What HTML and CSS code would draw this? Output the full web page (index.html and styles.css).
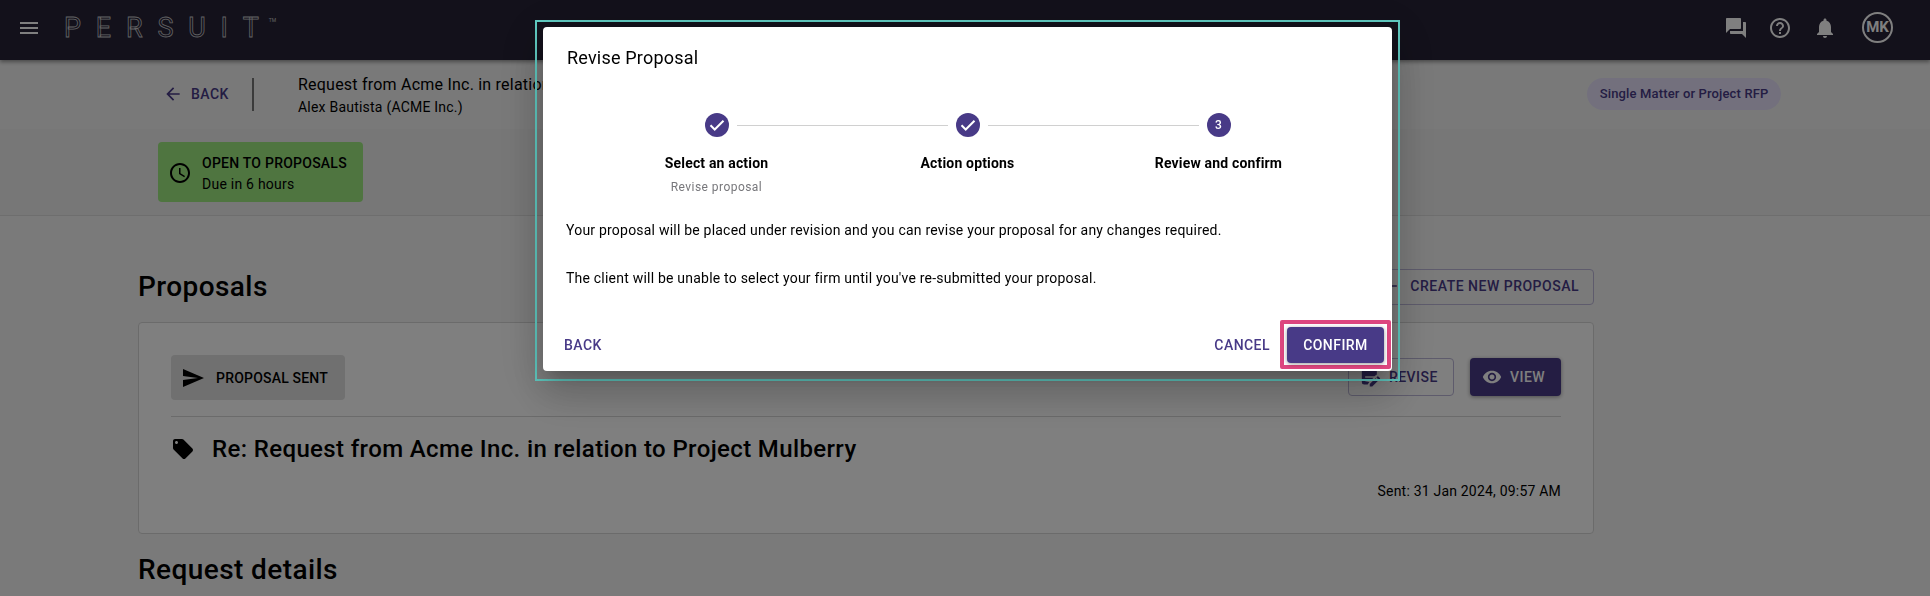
FILE: index.html
```html
<!DOCTYPE html>
<html lang="en">
<head>
    <meta charset="UTF-8">
    <meta name="viewport" content="width=device-width, initial-scale=1.0">
    <title>PERSUIT - Revise Proposal</title>
    <link rel="stylesheet" href="styles.css">
</head>
<body>

<!-- Top bar -->
<header class="topbar">
    <svg class="icon menu-icon" viewBox="0 0 24 24"><path d="M3 18h18v-2H3v2zm0-5h18v-2H3v2zm0-7v2h18V6H3z"/></svg>
    <div class="logo">PERSUI<span class="logo-last">T</span></div>
    <span class="logo-tm">TM</span>
    <div class="topbar-actions">
        <svg class="icon" viewBox="0 0 24 24"><path d="M21 6h-2v9H6v2c0 .55.45 1 1 1h11l4 4V7c0-.55-.45-1-1-1zm-4 6V3c0-.55-.45-1-1-1H3c-.55 0-1 .45-1 1v14l4-4h10c.55 0 1-.45 1-1z"/></svg>
        <svg class="icon" viewBox="0 0 24 24"><path d="M11 18h2v-2h-2v2zm1-16C6.48 2 2 6.48 2 12s4.48 10 10 10 10-4.48 10-10S17.52 2 12 2zm0 18c-4.41 0-8-3.59-8-8s3.59-8 8-8 8 3.59 8 8-3.59 8-8 8zm0-14c-2.21 0-4 1.79-4 4h2c0-1.1.9-2 2-2s2 .9 2 2c0 2-3 1.75-3 5h2c0-2.25 3-2.5 3-5 0-2.21-1.79-4-4-4z"/></svg>
        <svg class="icon" viewBox="0 0 24 24"><path d="M12 22c1.1 0 2-.9 2-2h-4c0 1.1.89 2 2 2zm6-6v-5c0-3.07-1.64-5.64-4.5-6.32V4c0-.83-.67-1.5-1.5-1.5s-1.5.67-1.5 1.5v.68C7.63 5.36 6 7.92 6 11v5l-2 2v1h16v-1l-2-2z"/></svg>
        <div class="avatar">MK</div>
    </div>
</header>

<!-- Request header -->
<div class="request-bar">
    <a class="back-link">
        <svg class="icon" viewBox="0 0 24 24"><path d="M20 11H7.83l5.59-5.59L12 4l-8 8 8 8 1.41-1.41L7.83 13H20v-2z"/></svg>
        <span>BACK</span>
    </a>
    <div class="bar-divider"></div>
    <div class="request-info">
        <div class="request-title">Request from Acme Inc. in relation to Project Mulberry</div>
        <div class="request-owner">Alex Bautista (ACME Inc.)</div>
    </div>
    <div class="chip">Single Matter or Project RFP</div>
</div>

<div class="status-bar">
    <div class="status">
        <svg class="icon" viewBox="0 0 24 24"><path d="M11.99 2C6.47 2 2 6.48 2 12s4.47 10 9.99 10C17.52 22 22 17.52 22 12S17.52 2 11.99 2zM12 20c-4.42 0-8-3.58-8-8s3.58-8 8-8 8 3.58 8 8-3.58 8-8 8zm.5-13H11v6l5.25 3.15.75-1.23-4.5-2.67z"/></svg>
        <div>
            <div class="status-title">OPEN TO PROPOSALS</div>
            <div class="status-due">Due in 6 hours</div>
        </div>
    </div>
</div>

<!-- Proposals -->
<main class="content">
    <div class="section-head">
        <h2 class="section-title">Proposals</h2>
        <button class="btn btn-outline btn-create">
            <svg class="icon" viewBox="0 0 24 24"><path d="M19 13h-6v6h-2v-6H5v-2h6V5h2v6h6v2z"/></svg>
            <span>CREATE NEW PROPOSAL</span>
        </button>
    </div>

    <div class="card">
        <div class="card-head">
            <div class="sent-badge">
                <svg class="icon" viewBox="0 0 24 24"><path d="M2.01 21L23 12 2.01 3 2 10l15 2-15 2z"/></svg>
                <span>PROPOSAL SENT</span>
            </div>
            <div class="card-actions">
                <button class="btn btn-outline btn-revise">
                    <svg class="icon" viewBox="0 0 24 24"><path d="M4 2h12l3 3v4l-3 2H5v2h10l-3 3H5v1l5 1-2 3H4a3 3 0 0 1-3-3V5a3 3 0 0 1 3-3z"/><path d="M10.500 20.500l7-7 3 3-7 7h-3zM18.500 12.500l1.200-1.200c.3-.3.7-.3 1 0l2 2c.3.3.3.7 0 1l-1.200 1.200z"/></svg>
                    <span>REVISE</span>
                </button>
                <button class="btn btn-primary btn-view">
                    <svg class="icon" viewBox="0 0 24 24"><path d="M12 4.5C7 4.5 2.73 7.61 1 12c1.730 4.390 6 7.500 11 7.500s9.270-3.110 11-7.500c-1.730-4.390-6-7.500-11-7.500zM12 17c-2.760 0-5-2.240-5-5s2.240-5 5-5 5 2.240 5 5-2.240 5-5 5zm0-8c-1.660 0-3 1.340-3 3s1.340 3 3 3 3-1.340 3-3-1.340-3-3-3z"/></svg>
                    <span>VIEW</span>
                </button>
            </div>
        </div>
        <div class="card-title">
            <svg class="icon" viewBox="0 0 24 24"><path d="M21.410 11.580l-9-9C12.050 2.220 11.550 2 11 2H4c-1.100 0-2 .9-2 2v7c0 .55.22 1.050.59 1.420l9 9c.36.36.86.58 1.410.58.55 0 1.050-.22 1.410-.59l7-7c.37-.36.59-.86.59-1.410 0-.55-.23-1.060-.59-1.420zM5.500 7C4.670 7 4 6.330 4 5.500S4.670 4 5.500 4 7 4.670 7 5.500 6.330 7 5.500 7z"/></svg>
            <h3>Re: Request from Acme Inc. in relation to Project Mulberry</h3>
        </div>
        <div class="card-date">Sent: 31 Jan 2024, 09:57 AM</div>
    </div>

    <h2 class="section-title">Request details</h2>
</main>

<!-- Dialog -->
<div class="backdrop">
    <div class="dialog-frame">
        <div class="dialog">
            <h1 class="dialog-title">Revise Proposal</h1>
            <div class="stepper">
                <div class="step">
                    <svg class="step-dot" viewBox="0 0 24 24"><circle cx="12" cy="12" r="12"/><path d="M5.500 12.300l4.200 4.200 8.800-8.800"/></svg>
                    <div class="step-label">Select an action</div>
                    <div class="step-note">Revise proposal</div>
                </div>
                <div class="step step-line">
                    <svg class="step-dot" viewBox="0 0 24 24"><circle cx="12" cy="12" r="12"/><path d="M5.500 12.300l4.200 4.200 8.800-8.800"/></svg>
                    <div class="step-label">Action options</div>
                </div>
                <div class="step step-line">
                    <div class="step-number">3</div>
                    <div class="step-label">Review and confirm</div>
                </div>
            </div>
            <p class="dialog-text">Your proposal will be placed under revision and you can revise your proposal for any changes required.</p>
            <p class="dialog-text text-second">The client will be unable to select your firm until you've re-submitted your proposal.</p>
            <div class="dialog-actions">
                <button class="btn btn-text btn-back">BACK</button>
                <button class="btn btn-text btn-cancel">CANCEL</button>
                <div class="confirm-frame">
                    <button class="btn btn-primary btn-confirm">CONFIRM</button>
                </div>
            </div>
        </div>
    </div>
</div>

</body>
</html>
```
FILE: styles.css
```css
* {
    box-sizing: border-box;
}
body {
    margin: 0;
    height: 596px;
    overflow: hidden;
    background-color: #f5f5f5;
    color: #000;
    font-family: Roboto, Arial, sans-serif;
    font-size: 14px;
}
h1, h2, h3, p {
    margin: 0;
    font-weight: 500;
}
.icon {
    width: 24px;
    height: 24px;
    fill: currentColor;
    flex-shrink: 0;
}

/* Top bar */
.topbar {
    position: relative;
    display: flex;
    align-items: center;
    height: 60px;
    padding: 0 37px 5px 17px;
    background-color: #262236;
    color: #fff;
    box-shadow: 0 2px 4px rgba(0, 0, 0, 0.4);
}
.logo {
    margin-left: 23px;
    font-size: 27px;
    line-height: 30px;
    letter-spacing: 14.8px;
    color: transparent;
    -webkit-text-stroke: 0.8px #c4c4c8;
}
.logo-last {
    letter-spacing: 0;
}
.logo-tm {
    margin: 0 0 15px 10px;
    font-size: 5px;
    color: #c4c4c8;
}
.topbar-actions {
    display: flex;
    align-items: center;
    gap: 20.4px;
    margin-left: auto;
}
.avatar {
    width: 31px;
    height: 31px;
    margin-left: 5px;
    border: 2px solid #fff;
    border-radius: 50%;
    font-weight: 700;
    font-size: 15px;
    line-height: 27px;
    text-align: center;
}

/* Request header */
.request-bar {
    display: flex;
    align-items: center;
    height: 69px;
    padding: 0 149px 1px 163px;
    background-color: #f3f3f3;
}
.back-link {
    display: flex;
    align-items: center;
    gap: 8px;
    width: 89px;
    color: #483a87;
    font-weight: 500;
    letter-spacing: 0.45px;
}
.back-link .icon {
    width: 20px;
    height: 20px;
}
.bar-divider {
    width: 2px;
    height: 33px;
    background-color: #777;
}
.request-info {
    margin-left: 44px;
    padding-top: 1px;
}
.request-title {
    font-size: 16px;
    line-height: 24px;
    letter-spacing: 0.22px;
}
.request-owner {
    line-height: 20px;
    letter-spacing: 0.22px;
}
.chip {
    margin-left: auto;
    height: 32px;
    padding: 0 12.5px;
    border-radius: 16px;
    background-color: #e6e1fa;
    color: #483a87;
    font-size: 13px;
    font-weight: 500;
    line-height: 31px;
    letter-spacing: 0.15px;
}

.status-bar {
    height: 87px;
    padding: 13px 0 0 158px;
    border-bottom: 1px solid #dcdcdc;
    background-color: #efefef;
}
.status {
    display: flex;
    align-items: center;
    gap: 10px;
    width: 205px;
    height: 60px;
    padding: 2px 0 0 10px;
    border-radius: 4px;
    background-color: #9eea80;
}
.status-title {
    font-weight: 500;
    line-height: 22px;
    letter-spacing: 0.24px;
}
.status-due {
    line-height: 21px;
    letter-spacing: 0.24px;
}

/* Proposals */
.content {
    width: 1456px;
    margin-left: 138px;
}
.section-head {
    display: flex;
    align-items: center;
    justify-content: space-between;
    height: 106px;
    padding-top: 36px;
}
.section-title {
    font-size: 28px;
    line-height: 34px;
    letter-spacing: 0.42px;
}
.btn {
    display: flex;
    align-items: center;
    border: none;
    border-radius: 4px;
    background: none;
    color: #483a87;
    font-family: inherit;
    font-size: 14px;
    font-weight: 500;
    letter-spacing: 0.45px;
    padding: 0;
    white-space: nowrap;
}
.btn .icon {
    width: 20px;
    height: 20px;
}
.btn-outline {
    border: 1px solid #bcb7d8;
}
.btn-primary {
    background-color: #483a87;
    color: #fff;
    box-shadow: 0 1px 4px rgba(0, 0, 0, 0.4);
}
.btn-create {
    height: 36px;
    padding: 0 14px 2px 15px;
    gap: 9px;
    letter-spacing: 0.5px;
}
.card {
    height: 212px;
    padding: 32px;
    border: 1px solid #d6d6d6;
    border-radius: 4px;
    background-color: #fff;
}
.card-head {
    display: flex;
    justify-content: space-between;
    height: 62px;
    border-bottom: 1px solid #d6d6d6;
}
.sent-badge {
    display: flex;
    align-items: center;
    gap: 11px;
    width: 174px;
    height: 45px;
    padding-left: 10px;
    border-radius: 4px;
    background-color: #e0e0e0;
    font-weight: 500;
    letter-spacing: 0.2px;
}
.card-actions {
    display: flex;
    gap: 16px;
    padding-top: 3px;
}
.btn-revise {
    width: 106px;
    height: 38px;
    padding-left: 12px;
    gap: 8px;
}
.btn-view {
    width: 91px;
    height: 38px;
    padding-left: 12px;
    gap: 8px;
}
.card-title {
    display: flex;
    align-items: center;
    gap: 17px;
    height: 64px;
}
.card-title h3 {
    font-size: 24px;
    line-height: 32px;
    letter-spacing: 0.37px;
}
.card-date {
    line-height: 20px;
    text-align: right;
    letter-spacing: 0.2px;
}
.card + .section-title {
    margin-top: 19px;
}

/* Dialog */
.backdrop {
    position: fixed;
    inset: 0;
    padding: 20px 0 0 535px;
    background-color: rgba(0, 0, 0, 0.5);
}
.dialog-frame {
    width: 865px;
    height: 361px;
    padding: 5px 6px;
    border: 2px solid #62cdc4;
}
.dialog {
    width: 849px;
    height: 344px;
    border-radius: 4px;
    background-color: #fff;
    box-shadow: 0 11px 15px -7px rgba(0, 0, 0, 0.2), 0 24px 38px 3px rgba(0, 0, 0, 0.14), 0 9px 46px 8px rgba(0, 0, 0, 0.12);
}
.dialog-title {
    padding: 17px 24px 0;
    font-size: 18px;
    font-weight: 400;
    line-height: 28px;
    letter-spacing: 0.2px;
}
.stepper {
    display: flex;
    height: 130px;
    padding: 41px 48px 0;
}
.step {
    position: relative;
    flex: 1;
    display: flex;
    flex-direction: column;
    align-items: center;
}
/* connector to the previous step */
.step-line::before {
    content: "";
    position: absolute;
    top: 12px;
    left: calc(-50% + 20px);
    width: calc(100% - 40px);
    height: 1px;
    background-color: #d0d0d0;
}
.step-dot {
    width: 24px;
    height: 24px;
}
.step-dot circle {
    fill: #483a87;
}
.step-dot path {
    fill: none;
    stroke: #fff;
    stroke-width: 2;
}
.step-number {
    width: 24px;
    height: 24px;
    border-radius: 50%;
    background-color: #483a87;
    color: #fff;
    font-size: 12px;
    font-weight: 500;
    line-height: 25px;
    text-align: center;
}
.step-label {
    margin-top: 16px;
    font-weight: 700;
    line-height: 20px;
    letter-spacing: 0.17px;
}
.step-note {
    margin-top: 5px;
    color: #77777b;
    font-size: 12px;
    line-height: 18px;
    letter-spacing: 0.45px;
}
.dialog-text {
    margin-top: 16px;
    padding-left: 23px;
    font-weight: 400;
    line-height: 24px;
    letter-spacing: 0.215px;
    white-space: nowrap;
}
.text-second {
    margin-top: 24px;
}
.dialog-actions {
    display: flex;
    align-items: center;
    margin-top: 30px;
    padding: 0 1px 0 21px;
}
.btn-cancel {
    margin-left: auto;
    margin-right: 10px;
}
.confirm-frame {
    width: 111px;
    height: 49px;
    padding: 3px;
    border: 4px solid #dc467f;
    border-radius: 2px;
}
.btn-confirm {
    width: 97px;
    height: 36px;
    justify-content: center;
}
```
